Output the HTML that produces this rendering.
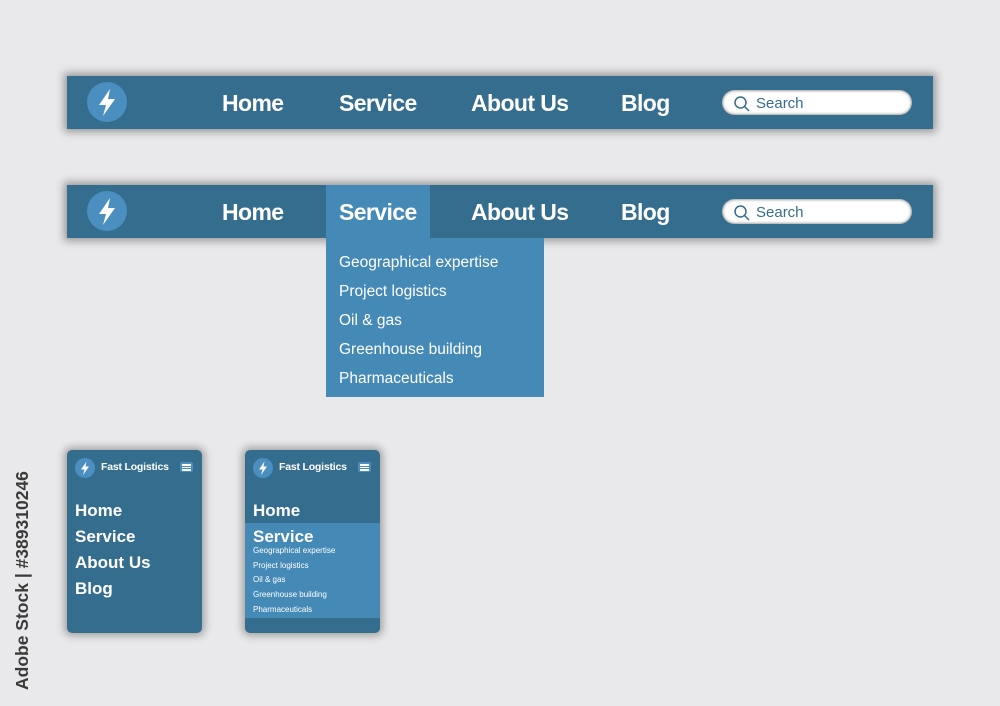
<!DOCTYPE html>
<html><head><style>
body{margin:0;width:1000px;height:706px;background:#e9e9eb;position:relative;overflow:hidden;font-family:"Liberation Sans",sans-serif}
.bar{position:absolute;left:67px;width:866px;height:53px;background:#356d8e;box-shadow:0 0 8px 3px rgba(0,0,0,.35)}
.logo{position:absolute;width:40px;height:40px;border-radius:50%;background:#4a8fbf}
.nav{position:absolute;color:#fff;font-weight:bold;font-size:23px;top:14px;letter-spacing:-0.6px}
.search{position:absolute;left:655px;top:14px;width:190px;height:25px;border-radius:13px;background:#fff;box-shadow:inset 0 0 3px #555}
.search span{position:absolute;left:34px;top:5px;color:#356d8e;font-size:15px}
.search svg{position:absolute;left:11px;top:5px}
.dd{position:absolute;left:326px;top:238px;width:218px;height:159px;background:#4589b6}
.dd div{position:absolute;left:13px;color:#fff;font-size:15.5px;margin-top:1px}
.card{position:absolute;top:450px;width:135px;height:183px;background:#356d8e;border-radius:5px;box-shadow:0 0 8px 3px rgba(0,0,0,.3);overflow:hidden}
.card .t{position:absolute;left:34px;top:11px;color:#fff;font-size:10.5px;font-weight:bold;letter-spacing:-0.2px}
.ham{position:absolute;left:113px;top:12px;width:13px;height:10px;background:#4a8fbf;border-radius:2px}
.ham i{position:absolute;left:2px;width:9px;height:1.5px;background:#fff}
.m{position:absolute;left:8px;color:#fff;font-weight:bold;font-size:17px;margin-top:1px}
.s{position:absolute;left:8px;color:#fff;font-size:8px}
</style></head><body>
<svg width="0" height="0" style="position:absolute"><defs><symbol id="bolt" viewBox="0 0 40 40"><path d="M23 7 L12 23 H19 L16 34 L28 17 H21 Z" fill="#fff"/></symbol></defs></svg>

<div class="bar" style="top:76px">
<div class="logo" style="left:20px;top:6px"><svg width="40" height="40"><use href="#bolt"/></svg></div>
<div class="nav" style="left:155px">Home</div>
<div class="nav" style="left:272px">Service</div>
<div class="nav" style="left:404px">About Us</div>
<div class="nav" style="left:554px">Blog</div>
<div class="search"><svg width="18" height="18"><circle cx="7.5" cy="7.5" r="5.5" fill="none" stroke="#356d8e" stroke-width="1.5"/><path d="M11.5 11.5 L16 16" stroke="#356d8e" stroke-width="1.5"/></svg><span>Search</span></div>
</div>

<div class="bar" style="top:185px">
<div style="position:absolute;left:259px;top:0;width:104px;height:53px;background:#4589b6"></div>
<div class="logo" style="left:20px;top:6px"><svg width="40" height="40"><use href="#bolt"/></svg></div>
<div class="nav" style="left:155px">Home</div>
<div class="nav" style="left:272px">Service</div>
<div class="nav" style="left:404px">About Us</div>
<div class="nav" style="left:554px">Blog</div>
<div class="search"><svg width="18" height="18"><circle cx="7.5" cy="7.5" r="5.5" fill="none" stroke="#356d8e" stroke-width="1.5"/><path d="M11.5 11.5 L16 16" stroke="#356d8e" stroke-width="1.5"/></svg><span>Search</span></div>
</div>
<div class="dd">
<div style="top:15px">Geographical expertise</div>
<div style="top:44px">Project logistics</div>
<div style="top:73px">Oil &amp; gas</div>
<div style="top:102px">Greenhouse building</div>
<div style="top:131px">Pharmaceuticals</div>
</div>

<div class="card" style="left:67px">
<div class="logo" style="left:8px;top:8px;width:20px;height:20px"><svg width="20" height="20"><use href="#bolt"/></svg></div>
<div class="t">Fast Logistics</div>
<div class="ham"><i style="top:2px"></i><i style="top:4.5px"></i><i style="top:7px"></i></div>
<div class="m" style="top:50px">Home</div>
<div class="m" style="top:76px">Service</div>
<div class="m" style="top:102px">About Us</div>
<div class="m" style="top:128px">Blog</div>
</div>

<div class="card" style="left:245px">
<div style="position:absolute;left:0;top:73px;width:135px;height:95px;background:#4589b6"></div>
<div class="logo" style="left:8px;top:8px;width:20px;height:20px"><svg width="20" height="20"><use href="#bolt"/></svg></div>
<div class="t">Fast Logistics</div>
<div class="ham"><i style="top:2px"></i><i style="top:4.5px"></i><i style="top:7px"></i></div>
<div class="m" style="top:50px">Home</div>
<div class="m" style="top:76px">Service</div>
<div class="s" style="top:96px">Geographical expertise</div>
<div class="s" style="top:111px">Project logistics</div>
<div class="s" style="top:125px">Oil &amp; gas</div>
<div class="s" style="top:140px">Greenhouse building</div>
<div class="s" style="top:155px">Pharmaceuticals</div>
</div>

<div style="position:absolute;left:12px;top:690px;transform-origin:0 0;transform:rotate(-90deg);white-space:nowrap;color:#3a3a3a;font-weight:bold;font-size:17.5px">Adobe Stock | #389310246</div>
</body></html>
